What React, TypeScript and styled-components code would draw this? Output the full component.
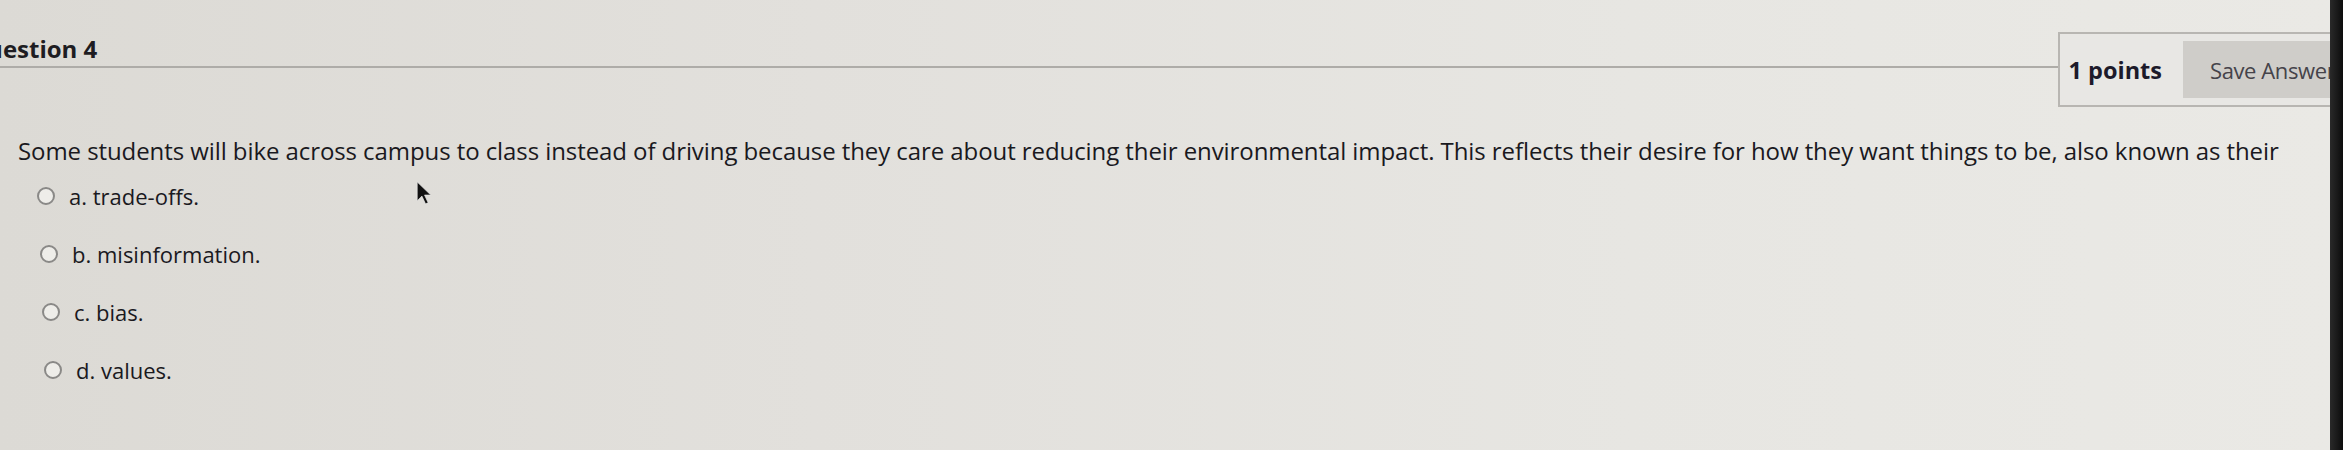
import styled, { createGlobalStyle } from 'styled-components';

const GlobalStyle = createGlobalStyle`
    html, body {
        margin: 0;
        padding: 0;
        background: #e3e1dd;
    }
    body {
        font-family: 'Open Sans', 'Liberation Sans', sans-serif;
    }
`;

const Screen = styled.div`
    display: flex;
    width: 2343px;
    height: 450px;
    overflow: hidden;
`;

const Page = styled.div`
    position: relative;
    flex: 1;
    overflow: hidden;
    background: linear-gradient(90deg, #dcdad5 0%, #e2e0dc 35%, #e7e6e2 70%, #eae9e5 100%);
`;

// dark bezel on the right side of the photo
const Bezel = styled.div`
    width: 13px;
    background: linear-gradient(90deg, #2a2a2a, #0c0c0c);
`;

const Header = styled.div`
    display: flex;
    align-items: flex-start;
`;

const TitleBar = styled.div`
    flex: 1;
    height: 66px;
    border-bottom: 2px solid #aeaca8;
    display: flex;
    align-items: flex-end;
`;

const Title = styled.h2`
    margin: 0 0 1px -32px;
    font-size: 24px;
    font-weight: 700;
    color: #1e1d22;
`;

const PointsBox = styled.div`
    margin-top: 32px;
    height: 71px;
    margin-right: -20px;
    border: 2px solid #b8b6b2;
    display: flex;
    align-items: center;
    padding-left: 9px;
    background: #e8e7e4;
`;

const Points = styled.span`
    font-size: 23.5px;
    font-weight: 700;
    color: #1c1a2a;
    margin-right: 21px;
`;

const SaveButton = styled.button`
    height: 57px;
    border: none;
    background: #cfcdc9;
    padding: 0 0 0 27px;
    width: 165px;
    text-align: left;
    white-space: nowrap;
    overflow: hidden;
    font-family: 'Open Sans', 'Liberation Sans', sans-serif;
    font-size: 22px;
    color: #45434a;
    letter-spacing: -0.4px;
`;

const Body = styled.div`
    padding: 28px 0 0 18px;
`;

const Question = styled.p`
    margin: 0;
    font-size: 24px;
    line-height: 32px;
    color: #1a191e;
    letter-spacing: -0.08px;
    white-space: nowrap;
`;

const Options = styled.div`
    display: flex;
    flex-direction: column;
    gap: 27px;
    margin-top: 13px;
    padding-left: 19px;
`;

const Option = styled.label<{ $shift: number }>`
    display: flex;
    align-items: center;
    gap: 14px;
    height: 31px;
    margin-left: ${(p) => p.$shift}px;
    font-size: 22px;
    color: #1a191e;
`;

const Radio = styled.span`
    width: 14px;
    height: 14px;
    border-radius: 50%;
    border: 2.5px solid #8a8987;
    background: #eeede9;
    flex-shrink: 0;
`;

const Cursor = styled.svg`
    position: absolute;
    left: 416px;
    top: 181px;
`;

const options = [
    { label: 'a. trade-offs.', shift: 0 },
    { label: 'b. misinformation.', shift: 3 },
    { label: 'c. bias.', shift: 5 },
    { label: 'd. values.', shift: 7 },
];

export default function App() {
    return (
        <Screen>
            <GlobalStyle />
            <Page>
                <Header>
                    <TitleBar>
                        <Title>Question 4</Title>
                    </TitleBar>
                    <PointsBox>
                        <Points>1 points</Points>
                        <SaveButton>Save Answer</SaveButton>
                    </PointsBox>
                </Header>
                <Body>
                    <Question>
                        Some students will bike across campus to class instead of driving because they care about reducing
                        their environmental impact. This reflects their desire for how they want things to be, also known
                        as their
                    </Question>
                    <Options>
                        {options.map((o) => (
                            <Option key={o.label} $shift={o.shift}>
                                <Radio />
                                {o.label}
                            </Option>
                        ))}
                    </Options>
                </Body>
                <Cursor width='17' height='27' viewBox='0 0 16 26'>
                    <path d='M1 1 L1 19 L5.5 14.5 L9 22 L11.5 21 L8 13.5 L14 13.5 Z' fill='#111' stroke='#e8e8e8' strokeWidth='0.6' />
                </Cursor>
            </Page>
            <Bezel />
        </Screen>
    );
}
